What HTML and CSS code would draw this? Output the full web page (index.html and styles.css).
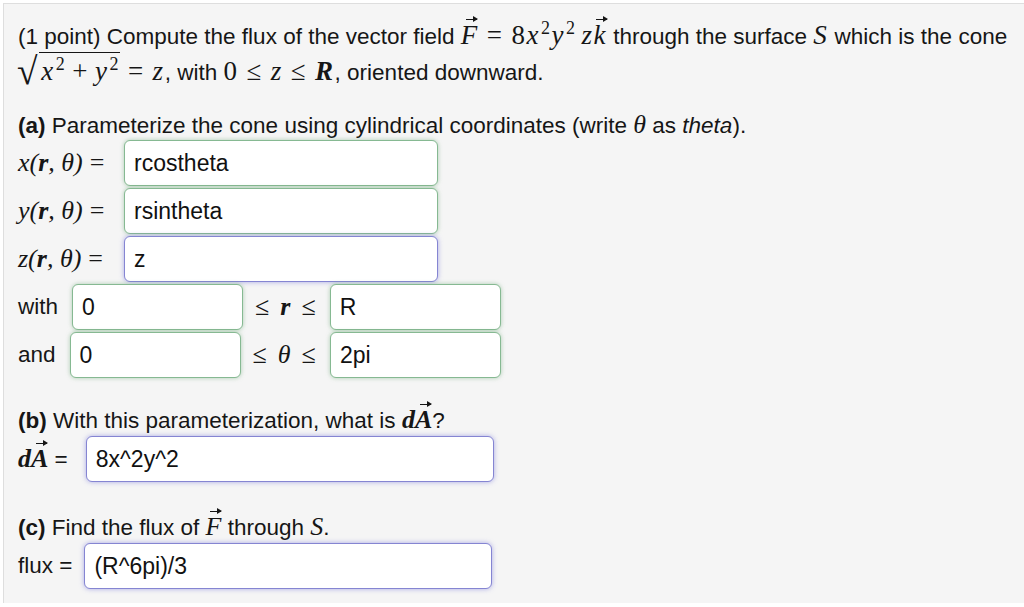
FILE: index.html
```html
<!DOCTYPE html>
<html>
<head>
<meta charset="utf-8">
<link rel="stylesheet" href="styles.css">
</head>
<body>
<div class="panel">
  <p class="intro">(1 point) Compute the flux of the vector field <span class="m"><span class="vec">F</span><span class="op">=</span><span class="up">8</span>x<sup>2</sup>y<sup>2</sup><span class="thin"></span>z<span class="vec">k</span></span> through the surface <span class="m">S</span> which is the cone<br><span class="m"><span class="sqrt">√</span><span class="rad">x<sup>2</sup><span class="bin">+</span>y<sup>2</sup></span><span class="op">=</span>z</span>, with <span class="m"><span class="up">0</span><span class="op">≤</span>z<span class="op">≤</span><b>R</b></span>, oriented downward.</p>

  <p class="part"><b>(a)</b> Parameterize the cone using cylindrical coordinates (write <span class="m">θ</span> as <i>theta</i>).</p>

  <div class="rows">
    <div class="row"><span class="m lbl">x(<b>r</b>, θ)<span class="op">=</span></span><span class="box ok w314">rcostheta</span></div>
    <div class="row"><span class="m lbl">y(<b>r</b>, θ)<span class="op">=</span></span><span class="box ok w314">rsintheta</span></div>
    <div class="row"><span class="m lbl">z(<b>r</b>, θ)<span class="op">=</span></span><span class="box bad w314">z</span></div>
    <div class="row"><span class="lbl">with</span><span class="box ok w171">0</span><span class="m rel"><span class="op">≤</span><b>r</b><span class="op">≤</span></span><span class="box ok w171">R</span></div>
    <div class="row"><span class="lbl">and</span><span class="box ok w171">0</span><span class="m rel"><span class="op">≤</span>θ<span class="op">≤</span></span><span class="box ok w171">2pi</span></div>
  </div>

  <p class="part pb"><b>(b)</b> With this parameterization, what is <span class="m"><b>d<span class="vec">A</span></b></span>?</p>
  <div class="row"><span class="lbl lbl-da"><span class="m"><b>d<span class="vec">A</span></b></span> =</span><span class="box bad w408">8x^2y^2</span></div>

  <p class="part pc"><b>(c)</b> Find the flux of <span class="m"><span class="vec">F</span></span> through <span class="m">S</span>.</p>
  <div class="row"><span class="lbl lbl-flux">flux =</span><span class="box bad w408">(R^6pi)/3</span></div>
</div>
</body>
</html>
```

FILE: styles.css
```css
html, body {
  margin: 0;
  padding: 0;
  background: #ffffff;
  width: 1024px;
  height: 607px;
  overflow: hidden;
}
body {
  font-family: "Liberation Sans", Arial, sans-serif;
  font-size: 22.5px;
  color: #161616;
}
.panel {
  margin: 3px 0 0 3px;
  background: #f5f5f5;
  border-left: 1px solid #dedede;
  border-top: 1px solid #dedede;
  padding: 14px 0 0 14px;
  height: 600px;
  box-sizing: border-box;
}
p { margin: 0; }
.intro {
  line-height: 34px;
  white-space: nowrap;
}
.m {
  font-family: "Liberation Serif", "Times New Roman", serif;
  font-style: italic;
  font-size: 26px;
}
.intro .m {
  font-size: 27px;
  letter-spacing: 1.5px;
}
.m .up { font-style: normal; }
.m .op {
  font-style: normal;
  margin: 0 7px;
}
.intro .m .op { margin: 0 8px; }
.m .bin {
  font-style: normal;
  margin: 0 6px;
}
.thin {
  display: inline-block;
  width: 5px;
}
.m b { font-style: italic; font-weight: bold; }
sup {
  font-size: 18px;
  line-height: 0;
  vertical-align: 10px;
  font-style: normal;
  margin-left: 1px;
}
.intro sup { margin: 0 0 0 1px; }
.vec {
  position: relative;
  display: inline-block;
  line-height: 1;
}
.vec::after {
  content: "";
  position: absolute;
  left: 50%;
  top: -3px;
  width: 11px;
  height: 1.4px;
  margin-left: -4px;
  background: #161616;
}
.vec::before {
  content: "";
  position: absolute;
  left: 50%;
  top: -5.8px;
  margin-left: 3px;
  border-left: 5px solid #161616;
  border-top: 3.5px solid transparent;
  border-bottom: 3.5px solid transparent;
}
.sqrt {
  font-style: normal;
  font-size: 34px;
  display: inline-block;
  transform: scale(1.1, 1.12);
  vertical-align: -3px;
  margin-right: 1px;
}
.rad {
  border-top: 1.4px solid #161616;
  padding-top: 3px;
  padding-left: 2px;
}
.part {
  line-height: 30px;
}
.intro + .part { margin-top: 20px; }
.rows {
  display: flex;
  flex-direction: column;
  gap: 2px;
  margin-top: -1px;
}
.row {
  display: flex;
  align-items: center;
  height: 46px;
}
.lbl {
  margin-right: 14px;
  white-space: nowrap;
}
.m.lbl {
  min-width: 92px;
}
.m.lbl .op { margin-right: 0; }
.lbl-da { margin-right: 18px; }
.lbl-flux { margin-right: 12px; }
.rel {
  margin: 0 14px 0 12px;
  white-space: nowrap;
}
.rel .op { margin: 0 11px; }
.rel .op:first-child { margin-left: 0; }
.rel .op:last-child { margin-right: 0; }
.box {
  box-sizing: border-box;
  height: 46px;
  background: #ffffff;
  border-radius: 6px;
  padding-left: 9px;
  display: flex;
  align-items: center;
  font-family: "Liberation Sans", Arial, sans-serif;
  font-size: 23px;
  color: #111;
}
.ok {
  border: 1.5px solid #86b992;
  box-shadow: 0 0 4px rgba(110, 170, 120, 0.55);
}
.bad {
  border: 1.5px solid #8585d2;
  box-shadow: 0 0 5px rgba(120, 120, 220, 0.6);
}
.w314 { width: 314px; }
.w171 { width: 171px; }
.w408 { width: 408px; }
.pb { margin-top: 27px; }
.pc { margin-top: 30px; }
```
